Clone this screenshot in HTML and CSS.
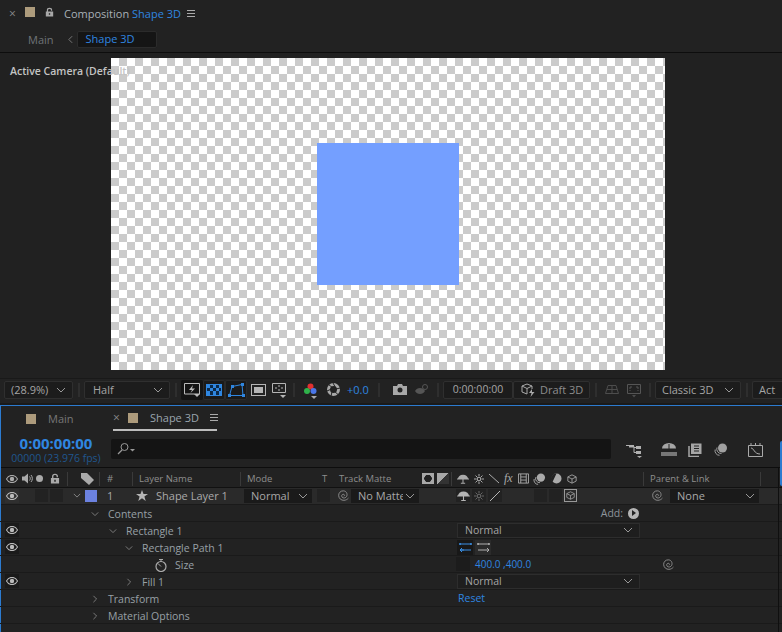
FILE: index.html
```html
<!DOCTYPE html>
<html lang="en">
<head>
<meta charset="utf-8">
<title>Composition Shape 3D</title>
<link rel="stylesheet" href="styles.css">
</head>
<body>
<svg class="defs" width="0" height="0">
  <symbol id="eye" viewBox="0 0 12 8"><path d="M0.5 4C2 1.3 4 .4 6 .4S10 1.3 11.5 4C10 6.7 8 7.6 6 7.6S2 6.7 .5 4Z" fill="none" stroke="currentColor" stroke-width="1.1"/><circle cx="6" cy="4" r="2.2" fill="currentColor"/></symbol>
  <symbol id="down" viewBox="0 0 10 6"><path d="M1 1L5 5L9 1" fill="none" stroke="currentColor" stroke-width="1"/></symbol>
  <symbol id="right" viewBox="0 0 6 10"><path d="M1 1L5 5L1 9" fill="none" stroke="currentColor" stroke-width="1"/></symbol>
  <symbol id="spiral" viewBox="0 0 14 14"><path d="M7.500 7.800C8.500 7.300 8.200 5.700 6.800 5.700C5.200 5.700 4.500 7.500 5.500 8.800C6.800 10.300 9.500 9.800 10.500 7.800C11.500 5 10 2.200 7 2C3.800 1.800 1.500 4.300 1.800 7.300C2.100 10.300 4.500 12.300 7.500 12.200C9.500 12.100 11 11.300 12.300 9.800" fill="none" stroke="currentColor" stroke-width="1"/></symbol>
  <symbol id="lock" viewBox="0 0 11 12"><path d="M3 6V3.500C3 .8 8 .8 8 3.500V4.500" fill="none" stroke="currentColor" stroke-width="1.500"/><path d="M1 5.500H10V11.500H1Z M4.700 7.500V9.500H6.300V7.500Z" fill="currentColor" fill-rule="evenodd"/></symbol>
  <symbol id="ham" viewBox="0 0 8 7"><path d="M0 .5H8M0 3.500H8M0 6.500H8" stroke="currentColor" stroke-width="1"/></symbol>
  <symbol id="solo" viewBox="0 0 14 11"><path d="M1 5.500A6 5 0 0 1 13 5.500Z" fill="currentColor"/><path d="M0 5.500H14M7 2V10.500M4.500 10.500H9.500" stroke="currentColor" stroke-width="1.200" fill="none"/></symbol>
  <symbol id="sun" viewBox="0 0 11 11"><circle cx="5.500" cy="5.500" r="2" fill="none" stroke="currentColor" stroke-width="1.200"/><path d="M5.500 0V2.500M5.500 8.500V11M0 5.500H2.500M8.500 5.500H11M1.700 1.700L3.300 3.300M7.700 7.700L9.300 9.300M1.700 9.300L3.300 7.700M7.700 3.300L9.300 1.700" stroke="currentColor" stroke-width="1.100"/></symbol>
  <symbol id="film" viewBox="0 0 12 12"><path d="M.5 1H11.500V11H.5Z M3 1V11M9 1V11M3 4.300H9M3 7.700H9" fill="none" stroke="currentColor" stroke-width="1"/></symbol>
  <symbol id="cube" viewBox="0 0 12 12"><path d="M6 1L11 3.500V8.500L6 11L1 8.500V3.500ZM1 3.500L6 6L11 3.500M6 6V11" fill="none" stroke="currentColor" stroke-width="1"/></symbol>
  <symbol id="discs" viewBox="0 0 14 13"><circle cx="8.500" cy="5" r="4.500" fill="currentColor"/><path d="M3 4.500A4.500 4.500 0 0 0 7.500 10.500M1.200 6.500A4.500 4.500 0 0 0 5.500 12.300" fill="none" stroke="currentColor" stroke-width="1"/></symbol>
</svg>

<section class="comp-panel">
  <header class="comp-tab">
    <span class="close">×</span>
    <span class="swatch"></span>
    <svg class="lock-top"><use href="#lock"/></svg>
    <span class="comp-title">Composition <b class="blue">Shape 3D</b></span>
    <svg class="ham"><use href="#ham"/></svg>
  </header>
  <nav class="crumbs">
    <span class="crumb-main">Main</span>
    <svg class="crumb-chev" viewBox="0 0 6 10"><path d="M5 1L1 5L5 9" fill="none" stroke="currentColor"/></svg>
    <span class="crumb-box blue">Shape 3D</span>
  </nav>
  <div class="viewer">
    <div class="stage"><div class="shape"></div></div>
    <div class="cam-label">Active Camera (Default)</div>
  </div>
  <div class="toolbar">
    <span class="tb-select w-zoom">(28.9%)<svg class="chev"><use href="#down"/></svg></span>
    <i class="sep"></i>
    <span class="tb-select w-half">Half<svg class="chev"><use href="#down"/></svg></span>
    <i class="sep"></i>
    <span class="tb-btn btn-dark"><svg width="16" height="14" viewBox="0 0 16 14"><path d="M.5 .5H15.500V11H.5Z" fill="none" stroke="#bbb"/><path d="M9 2L5 7H8L6.500 10L11 5.500H8Z" fill="#bbb"/><path d="M10 11H16L13 14Z" fill="#bbb"/></svg></span>
    <span class="tb-btn btn-on"><svg width="16" height="12" viewBox="0 0 16 12"><rect x=".5" y=".5" width="15" height="11" fill="#0c2a4a" stroke="#2f86e0"/><path d="M1 1H4V4H1ZM7 1H10V4H7ZM13 1H15V4H13ZM4 4H7V7H4ZM10 4H13V7H10ZM1 7H4V11H1ZM7 7H10V11H7ZM13 7H15V11H13Z" fill="#2f86e0"/></svg></span>
    <span class="tb-btn btn-on"><svg width="17" height="14" viewBox="0 0 17 14"><path d="M1.500 12.500L4 3.500L14 1.500L15 12.500Z" fill="none" stroke="#2f86e0"/><path d="M0 11H3V14H0ZM3 2H6V5H3ZM13 0H16V3H13ZM14 11H17V14H14Z" fill="#2f86e0"/></svg></span>
    <span class="tb-ico ico-mask"><svg width="15" height="12" viewBox="0 0 15 12"><rect x=".5" y=".5" width="14" height="11" fill="none" stroke="#b5b5b5"/><rect x="3" y="3" width="9" height="6" fill="#b5b5b5"/></svg></span>
    <span class="tb-ico ico-safe"><svg width="16" height="16" viewBox="0 0 16 16"><path d="M1.500 .5H14.500V9.500H1.500Z M8 2V4M8 6V8M4 5H6M10 5H12" fill="none" stroke="#b5b5b5"/><path d="M9 12H15L12 15Z" fill="#b5b5b5"/></svg></span>
    <i class="sep sep-a"></i>
    <span class="tb-ico ico-rgb"><svg width="14" height="16" viewBox="0 0 14 16"><circle cx="6.500" cy="3.500" r="3" fill="#e23030"/><circle cx="3" cy="8" r="3" fill="#2fb24a"/><circle cx="9.500" cy="8" r="3" fill="#4a76e8"/><path d="M7 13H13L10 16Z" fill="#aaa"/></svg></span>
    <span class="tb-ico ico-shutter"><svg width="13" height="13" viewBox="0 0 13 13"><circle cx="6.500" cy="6.500" r="5" fill="none" stroke="#a8a8a8" stroke-width="3"/><path d="M6 0L9 5.500M13 5L7 6.500M11 11.500L6.500 7.500M4 13L5.500 7M0 8L5.500 5.500M1.500 1.500L6 5" stroke="#222" stroke-width="1"/></svg></span>
    <span class="blue exposure">+0.0</span>
    <i class="sep"></i>
    <span class="tb-ico ico-cam"><svg width="14" height="11" viewBox="0 0 14 11"><path d="M0 2H4L5 0H9L10 2H14V11H0ZM7 3.500A2.500 2.500 0 1 0 7 8.500A2.500 2.500 0 1 0 7 3.500Z" fill="#a8a8a8" fill-rule="evenodd"/></svg></span>
    <span class="tb-ico ico-snap"><svg width="14" height="12" viewBox="0 0 14 12"><circle cx="10" cy="3" r="2.500" fill="none" stroke="#555"/><path d="M0 7C2 3 8 3 10 7C8 11 2 11 0 7Z" fill="#555"/></svg></span>
    <i class="sep sep-c"></i>
    <span class="tb-box w-time">0:00:00:00</span>
    <span class="tb-box w-draft"><svg class="draft-ico" width="15" height="14" viewBox="0 0 15 14"><path d="M6 1L11 3V6M1 3L6 1M1 3V9L6 11M1 3L6 5.500V11M6 5.500L11 3" fill="none" stroke="#aaa"/><path d="M11 6L8 10H10.500L9.500 14L13.500 9H11Z" fill="#aaa"/></svg>Draft 3D</span>
    <i class="sep"></i>
    <span class="tb-ico ico-grid"><svg width="14" height="9" viewBox="0 0 14 9"><path d="M3 .5H11L13.500 8.500H.5ZM7 .5V8.500M2 4.500H12" fill="none" stroke="#4d4d4d"/></svg></span>
    <span class="tb-ico ico-view"><svg width="14" height="14" viewBox="0 0 14 14"><path d="M.5 .5H13.500V9.500H.5Z" fill="none" stroke="#555"/><path d="M3 3H5M3 3V5M11 3H9M11 3V5M3 7V6M11 7V6" stroke="#555"/><path d="M5 11H9L7 13.500Z" fill="#4d4d4d"/></svg></span>
    <i class="sep sep-b"></i>
    <span class="tb-select w-classic">Classic 3D<svg class="chev"><use href="#down"/></svg></span>
    <i class="sep"></i>
    <span class="tb-select w-act">Act</span>
  </div>
</section>

<section class="timeline">
  <div class="tl-tabs">
    <div class="tl-tab tab-main"><span class="swatch"></span><span class="tab-name dim">Main</span></div>
    <div class="tl-tab tab-active"><span class="close">×</span><span class="swatch"></span><span class="tab-name">Shape 3D</span><svg class="ham"><use href="#ham"/></svg></div>
  </div>
  <div class="tl-tools">
    <div class="timecode"><div class="tc-main">0:00:00:00</div><div class="tc-sub">00000 (23.976 fps)</div></div>
    <div class="search"><svg width="18" height="13" viewBox="0 0 18 13"><circle cx="7.500" cy="5" r="3.500" fill="none" stroke="#999"/><path d="M5 8L1 12" stroke="#999" stroke-width="1.300"/><path d="M13 7H18L15.500 9.500Z" fill="#999"/></svg></div>
    <div class="tools">
      <svg class="t-flow" width="18" height="13" viewBox="0 0 18 13"><path d="M0 .5H5" stroke="#b0b0b0" stroke-width="1"/><path d="M3 0H8V2.500H3ZM10 1H15V4H10ZM10 6H15V9H10Z" fill="#b0b0b0"/><path d="M8 1.500V7.500H10M8 2.500H10" fill="none" stroke="#b0b0b0"/><path d="M11 11H16L13.500 13Z" fill="#b0b0b0"/></svg>
      <svg class="t-shy" width="16" height="13" viewBox="0 0 16 13"><path d="M1 5.500A7 5.500 0 0 1 15 5.500Z" fill="#a6a6a6"/><path d="M8 1V9" stroke="#222"/><path d="M0 9H16V13H0Z" fill="#777"/></svg>
      <svg class="t-film" width="14" height="14" viewBox="0 0 14 14"><path d="M3 .5H13.500V11H3Z" fill="#a6a6a6"/><path d="M6 3H11M6 5.500H11M6 8H11" stroke="#222"/><path d="M1 3V13.500H11" fill="none" stroke="#a6a6a6" stroke-width="1.500"/></svg>
      <svg class="t-disc" width="14" height="13"><use href="#discs"/></svg>
      <svg class="t-graph" width="15" height="14" viewBox="0 0 15 14"><path d="M.5 2.500H14.500V13.500H.5Z" fill="none" stroke="#aaa"/><path d="M3 5C6 5 6 11 12 11M3 0V2M7.500 0V2M12 0V2" fill="none" stroke="#aaa"/></svg>
    </div>
  </div>

  <div class="tl-head">
    <span class="hc h-eye"><svg width="12" height="8"><use href="#eye"/></svg></span>
    <span class="hc h-aud"><svg width="11" height="11" viewBox="0 0 11 11"><path d="M0 3.500H2.500L6 .5V10.500L2.500 7.500H0Z" fill="currentColor"/><path d="M7.500 3.500C8.500 4.500 8.500 6.500 7.500 7.500M9 2C10.800 4 10.800 7 9 9" fill="none" stroke="currentColor"/></svg></span>
    <span class="hc h-dot"><i class="dot"></i></span>
    <span class="hc h-lock"><svg width="10" height="11"><use href="#lock"/></svg></span>
    <span class="hc h-tag"><svg width="13" height="12" viewBox="0 0 13 12"><path d="M0 0H6L13 7L8 12L0 5Z" fill="currentColor"/></svg></span>
    <span class="hc h-num">#</span>
    <span class="hc h-name">Layer Name</span>
    <span class="hc h-mode">Mode</span>
    <span class="hc h-t">T</span>
    <span class="hc h-matte">Track Matte</span>
    <span class="hc h-mask"><i class="mk"></i><i class="mk mk2"></i></span>
    <span class="hc h-sw">
      <svg width="12" height="10"><use href="#solo"/></svg>
      <svg width="10" height="10"><use href="#sun"/></svg>
      <svg width="10" height="10" viewBox="0 0 10 10"><path d="M0 0L10 9" stroke="currentColor"/></svg>
      <em class="fx">fx</em>
      <svg width="11" height="11"><use href="#film"/></svg>
      <svg class="disc-h" width="13" height="12"><use href="#discs"/></svg>
      <svg width="11" height="11" viewBox="0 0 11 11"><circle cx="5.500" cy="5.500" r="5" fill="currentColor"/><path d="M5.500 .5A5 5 0 0 0 1.500 9Z" fill="#222"/></svg>
      <svg width="10" height="10"><use href="#cube"/></svg>
    </span>
    <span class="hc h-parent">Parent &amp; Link</span>
    <span class="hc h-end"></span>
  </div>

  <div class="layer-row">
    <span class="ls-eye"><svg width="12" height="8"><use href="#eye"/></svg></span>
    <i class="ls-box b1"></i><i class="ls-box b2"></i>
    <svg class="ls-chev"><use href="#down"/></svg>
    <i class="ls-color"></i>
    <span class="ls-num">1</span>
    <svg class="ls-star" width="12" height="11" viewBox="0 0 12 11"><path d="M6 0L7.500 4H12L8.400 6.600L9.700 11L6 8.300L2.300 11L3.600 6.600L0 4H4.500Z" fill="#b5b5b5"/></svg>
    <span class="ls-name">Shape Layer 1</span>
    <span class="ls-sel s-mode">Normal<svg class="chev"><use href="#down"/></svg></span>
    <i class="ls-box b-t"></i>
    <svg class="ls-spiral" width="13" height="13"><use href="#spiral"/></svg>
    <span class="ls-sel s-matte"><span class="clip">No Matte</span><svg class="chev"><use href="#down"/></svg></span>
    <span class="ls-sw first"><svg width="13" height="10"><use href="#solo"/></svg></span>
    <span class="ls-sw sw-sun"><svg width="10" height="10"><use href="#sun"/></svg></span>
    <span class="ls-sw"><svg width="12" height="12" viewBox="0 0 12 12"><path d="M1 11L11 1" stroke="#b5b5b5"/></svg></span>
    <i class="ls-box b-a"></i><i class="ls-box b-b"></i>
    <span class="ls-cube"><svg width="10" height="10"><use href="#cube"/></svg></span>
    <svg class="ls-spiral sp-parent" width="13" height="13"><use href="#spiral"/></svg>
    <span class="ls-sel s-none">None<svg class="chev"><use href="#down"/></svg></span>
  </div>

  <div class="prop">
    <div class="p-name d1"><svg class="tw"><use href="#down"/></svg>Contents</div>
    <div class="p-val p-add">Add:<i class="play"></i></div>
    <div class="p-link"></div>
  </div>
  <div class="prop">
    <div class="p-name d2"><span class="p-eye"><svg width="12" height="8"><use href="#eye"/></svg></span><svg class="tw"><use href="#down"/></svg>Rectangle 1</div>
    <div class="p-val"><span class="p-sel">Normal<svg class="chev"><use href="#down"/></svg></span></div>
    <div class="p-link"></div>
  </div>
  <div class="prop">
    <div class="p-name d3"><span class="p-eye"><svg width="12" height="8"><use href="#eye"/></svg></span><svg class="tw"><use href="#down"/></svg>Rectangle Path 1</div>
    <div class="p-val p-dirs">
      <span class="dir dir-on"><svg width="13" height="10" viewBox="0 0 13 10"><path d="M1 2H12M5 8H1M3 6L1 8L3 10" fill="none" stroke="#3a8fe6"/><path d="M1 8H12" stroke="#3a8fe6"/><circle cx="1" cy="2" r="1" fill="#3a8fe6"/><circle cx="12" cy="2" r="1" fill="#3a8fe6"/></svg></span>
      <span class="dir"><svg width="13" height="10" viewBox="0 0 13 10"><path d="M1 2H12M1 8H12M10 6L12 8L10 10" fill="none" stroke="#b0b0b0"/><circle cx="1" cy="2" r="1" fill="#b0b0b0"/><circle cx="12" cy="2" r="1" fill="#b0b0b0"/></svg></span>
    </div>
    <div class="p-link"></div>
  </div>
  <div class="prop">
    <div class="p-name d4"><svg class="stop" width="12" height="13" viewBox="0 0 12 13"><circle cx="6" cy="7.500" r="5" fill="none" stroke="#aaa" stroke-width="1.200"/><path d="M4 .5H8M6 1V3M6 7.500L3 4.500" stroke="#aaa"/></svg>Size</div>
    <div class="p-val p-size"><i class="key-box"></i><span class="blue">400.0 ,400.0</span></div>
    <div class="p-link"><svg class="ls-spiral" width="13" height="13"><use href="#spiral"/></svg></div>
  </div>
  <div class="prop">
    <div class="p-name d3"><span class="p-eye"><svg width="12" height="8"><use href="#eye"/></svg></span><svg class="tw"><use href="#right"/></svg>Fill 1</div>
    <div class="p-val"><span class="p-sel">Normal<svg class="chev"><use href="#down"/></svg></span></div>
    <div class="p-link"></div>
  </div>
  <div class="prop">
    <div class="p-name d1"><svg class="tw"><use href="#right"/></svg>Transform</div>
    <div class="p-val p-reset"><span class="blue">Reset</span></div>
    <div class="p-link"></div>
  </div>
  <div class="prop">
    <div class="p-name d1"><svg class="tw"><use href="#right"/></svg>Material Options</div>
    <div class="p-val"></div>
    <div class="p-link"></div>
  </div>
  <i class="tl-rule"></i>
  <i class="playhead"></i>
</section>
</body>
</html>
```
FILE: styles.css
```css
* { box-sizing: border-box; }
html, body { margin: 0; height: 632px; overflow: hidden; }
body { background: #222; color: #a3a3a3; font: 11px/1 "Open Sans", "Noto Sans", sans-serif; width: 782px; }
svg { display: block; flex: none; }
i, em, b { font-style: normal; font-weight: 400; }
.defs { position: absolute; }
.blue { color: #2f86e0; }
.dim { color: #777; }
.swatch { width: 10px; height: 10px; background: #ad9b7c; flex: none; }
.close { color: #8a8a8a; font-size: 12px; width: 8px; flex: none; margin-top: 1px; }
.ham { width: 8px; height: 7px; color: #aaa; }
.chev { width: 10px; height: 6px; margin-left: auto; color: #999; }

.comp-tab { height: 27px; display: flex; align-items: center; padding-left: 9px; background: #222; }
.comp-tab .swatch { margin-left: 8px; margin-top: -3px; }
.lock-top { width: 9px; height: 10px; margin-left: 10px; margin-top: -4px; color: #a8a8a8; }
.comp-title { margin-left: 10px; color: #a9b1b8; font-size: 11px; }
.comp-tab .ham { margin-left: 6px; }

.crumbs { height: 26px; display: flex; align-items: center; background: #222; border-bottom: 1px solid #0d0d0d; padding-bottom: 1px; }
.crumb-main { margin-left: 28px; color: #6f7478; }
.crumb-chev { width: 5px; height: 9px; margin-left: 14px; color: #888; }
.crumb-box { width: 80px; height: 17px; margin-left: 4px; background: #151515; border: 1px solid #2b2b2b; border-radius: 2px; padding: 1px 0 0 8px; }

.viewer { position: relative; height: 325px; padding: 5px 0 8px 111px; background: #212121; }
.stage { width: 554px; height: 312px; display: flex; justify-content: center; align-items: center;
  background: conic-gradient(#cbcbcb 25%, #fff 0 50%, #cbcbcb 0 75%, #fff 0) 0 0 / 16px 16px; }
.shape { width: 142px; height: 142px; background: #749fff; }
.cam-label { position: absolute; left: 10px; top: 13px; color: #c4c4c4; font-weight: 600; font-size: 10.500px; }

.toolbar { height: 27px; background: #222; border-top: 1px solid #191919; border-bottom: 2px solid #1a1a1a; display: flex; align-items: center; padding: 0 0 3px 4px; overflow: hidden; }
.tb-select, .tb-box { height: 18px; display: flex; align-items: center; background: #1c1c1c; border: 1px solid #2f2f2f; border-radius: 2px; color: #a5a5a5; flex: none; }
.tb-select { padding: 0 6px 0 6px; }
.sep { width: 2px; height: 14px; background: #2e2e2e; margin: 0 4px 0 5px; flex: none; }
.sep-a { margin: 0 4px 0 6px; }
.sep-b { margin: 0 4px 0 8px; }
.sep-c { margin: 0 4px 0 8px; }
.w-zoom { width: 69px; }
.w-half { width: 86px; padding-left: 8px; }
.w-classic { width: 86px; }
.w-act { width: 32px; border-right: 0; }
.tb-btn { width: 22px; height: 20px; display: flex; align-items: center; justify-content: center; flex: none; }
.btn-dark { background: #141414; border-radius: 2px; }
.btn-on { background: #1a1a1a; border: 1px solid #2a2a2a; border-radius: 2px; }
.tb-ico { display: flex; justify-content: center; flex: none; }
.ico-mask { width: 15px; margin-left: 4px; }
.ico-safe { width: 16px; margin-left: 5px; margin-top: 3px; }
.ico-rgb { width: 14px; margin-left: 5px; margin-top: 2px; }
.ico-shutter { width: 13px; margin-left: 9px; }
.exposure { margin-left: 7px; width: 26px; flex: none; }
.ico-cam { width: 14px; margin-left: 9px; }
.ico-snap { width: 14px; margin-left: 8px; }
.w-time { width: 70px; justify-content: center; font-size: 10.500px; }
.w-draft { width: 77px; margin-left: 0; padding-left: 7px; color: #8d8d8d; }
.draft-ico { margin-right: 4px; }
.ico-grid { width: 14px; margin-left: 4px; }
.ico-view { width: 14px; margin-left: 8px; margin-top: 3px; }

.timeline { position: relative; height: 227px; border-top: 1px solid #2c7bd0; border-left: 1px solid #2c7bd0; background: #222; }
.tl-tabs { height: 27px; display: flex; }
.tl-tab { display: flex; align-items: center; height: 25px; white-space: nowrap; }
.tab-main { width: 112px; padding-left: 25px; }
.tab-name { margin-left: 12px; font-size: 11px; }
.tab-active { width: 104px; border-bottom: 2px solid #bdbdbd; padding-left: 0; color: #9aa5ae; }
.tab-active .swatch { margin-left: 7px; }
.tab-active .ham { margin-left: 11px; }
.tab-active .tab-name { margin-left: 12px; }

.tl-tools { height: 35px; display: flex; border-bottom: 1px solid #0d0d0d; }
.timecode { width: 110px; text-align: center; padding-top: 3px; }
.tc-main { color: #2f86e0; font-size: 15px; font-weight: 700; }
.tc-sub { color: #20568e; font-size: 10.500px; margin-top: 2px; }
.search { width: 500px; height: 20px; margin-top: 6px; background: #141414; border-radius: 2px; padding: 3px 0 0 6px; }
.tools { display: flex; align-items: flex-start; padding-top: 7px; }
.t-flow { margin-left: 15px; margin-top: 5px; }
.t-shy { margin-left: 17px; margin-top: 3px; }
.t-film { margin-left: 11px; margin-top: 3px; }
.t-disc { margin-left: 12px; margin-top: 3px; color: #a0a0a0; }
.t-graph { margin-left: 20px; margin-top: 3px; }

.tl-head { height: 20px; display: flex; align-items: center; border-bottom: 1px solid #111; font-size: 9.500px; background: #222; padding-top: 2px; }
.hc { height: 14px; display: flex; align-items: center; flex: none; color: #8e8e8e; }
.h-eye { width: 20px; padding-left: 5px; color: #aaa; }
.h-aud { width: 14px; color: #aaa; padding-left: 1px; }
.h-dot { width: 13px; padding-left: 1px; }
.dot { width: 7px; height: 7px; border-radius: 50%; background: #aaa; }
.h-lock { width: 20px; padding-left: 2px; color: #aaa; border-right: 1px solid #3a3a3a; }
.h-tag { width: 32px; padding-left: 13px; color: #aaa; border-right: 1px solid #3a3a3a; }
.h-num { width: 33px; padding-left: 7px; border-right: 1px solid #3a3a3a; }
.h-name { width: 108px; padding-left: 6px; border-right: 1px solid #3a3a3a; }
.h-mode { width: 81px; padding-left: 6px; }
.h-t { width: 17px; }
.h-matte { width: 83px; }
.h-mask { width: 29px; gap: 3px; }
.mk { width: 12px; height: 11px; background: radial-gradient(circle, #222 3.500px, #a8a8a8 4px); }
.mk2 { background: linear-gradient(135deg, #a8a8a8 50%, #333 50%); }
.h-sw { width: 193px; padding-left: 5px; gap: 5px; color: #aaa; border-left: 1px solid #3a3a3a; border-right: 1px solid #3a3a3a; }
.fx { font: italic 12px "Liberation Serif", serif; width: 9px; }
.disc-h { margin-left: -1px; }
.h-parent { width: 117px; padding-left: 6px; border-right: 1px solid #3a3a3a; }
.h-end { width: 15px; }

.layer-row { height: 17px; display: flex; align-items: center; background: #2a2a2a; border-bottom: 1px solid #1a1a1a; font-size: 11px; padding-bottom: 1px; }
.layer-row > * { flex: none; }
.ls-eye { width: 14px; height: 14px; margin-left: 4px; display: flex; align-items: center; justify-content: center; color: #bbb; background: #2f2f2f; }
.ls-box { width: 13px; height: 13px; background: #222; }
.b1 { margin-left: 16px; }
.b2 { margin-left: 2px; }
.ls-chev { width: 8px; height: 5px; margin-left: 10px; color: #999; }
.ls-color { width: 12px; height: 12px; margin-left: 4px; background: #6c82e0; }
.ls-num { width: 7px; margin-left: 10px; color: #a8a8a8; }
.ls-star { margin-left: 22px; }
.ls-name { width: 88px; margin-left: 8px; color: #a9a9a9; }
.ls-sel { height: 14px; display: flex; align-items: center; background: #1a1a1a; padding: 0 4px 0 7px; color: #a8a8a8; }
.s-mode { width: 68px; }
.b-t { margin-left: 5px; }
.ls-spiral { color: #8f8f8f; margin-left: 5px; }
.layer-row .ls-spiral { margin-left: 7px; }
.s-matte { width: 68px; margin-left: 1px; }
.clip { width: 45px; overflow: hidden; white-space: nowrap; }
.ls-sw { width: 14px; height: 13px; background: #222; display: flex; align-items: center; justify-content: center; color: #b5b5b5; margin-left: 2px; }
.ls-sw.first { margin-left: 37px; }
.sw-sun { color: #666; }
.b-a { margin-left: 32px; }
.b-b { margin-left: 2px; }
.ls-cube { width: 13px; height: 13px; margin-left: 2px; border: 1px solid #999; display: flex; align-items: center; justify-content: center; color: #aaa; }
.ls-cube svg { width: 9px; height: 9px; }
.layer-row .sp-parent { margin-left: 74px; }
.s-none { width: 89px; margin-left: 6px; }

.prop { height: 17px; display: grid; grid-template-columns: 455px 185px 1fr; align-items: center; border-bottom: 1px solid #1a1a1a; font-size: 10.500px; margin-left: -1px; }
.p-name { position: relative; height: 16px; display: flex; align-items: center; color: #98a0a6; padding-top: 2px; }
.d1 { padding-left: 88px; }
.d2 { padding-left: 106px; }
.d3 { padding-left: 122px; }
.d4 { padding-left: 155px; }
.tw { width: 8px; height: 8px; margin: 0 9px 0 3px; color: #909090; }
.p-eye { position: absolute; left: 5px; top: 1px; width: 14px; height: 14px; display: flex; align-items: center; justify-content: center; background: #1a1a1a; color: #bbb; }
.stop { margin-right: 8px; }
.p-val { display: flex; align-items: center; height: 16px; }
.p-add { justify-content: flex-end; color: #8e959b; }
.play { width: 11px; height: 11px; margin-left: 5px; margin-right: 1px; border-radius: 50%; background: #b5b5b5; position: relative; }
.play::after { content: ""; position: absolute; left: 4px; top: 2.500px; border-left: 4px solid #222; border-top: 3px solid transparent; border-bottom: 3px solid transparent; }
.p-sel { width: 183px; height: 15px; margin-left: 2px; display: flex; align-items: center; background: #1e1e1e; border: 1px solid #2d2d2d; padding: 0 6px 0 7px; color: #a5a5a5; }
.p-dirs { padding-left: 2px; gap: 2px; }
.dir { width: 16px; height: 15px; background: #2b2b2b; display: flex; align-items: center; justify-content: center; }
.dir-on { background: #181818; }
.p-size { padding-left: 1px; font-size: 10px; }
.key-box { width: 14px; height: 14px; background: #1c1c1c; margin-right: 5px; }
.p-reset { padding-left: 3px; }
.p-link { height: 16px; display: flex; align-items: center; padding-left: 17px; }
.tl-rule { position: absolute; left: 777px; top: 62px; bottom: 0; width: 1px; background: #0f0f0f; }
.playhead { position: absolute; left: 779px; top: 35px; width: 2px; height: 45px; background: #2c7bd0; border-radius: 2px 0 0 2px; }
```
